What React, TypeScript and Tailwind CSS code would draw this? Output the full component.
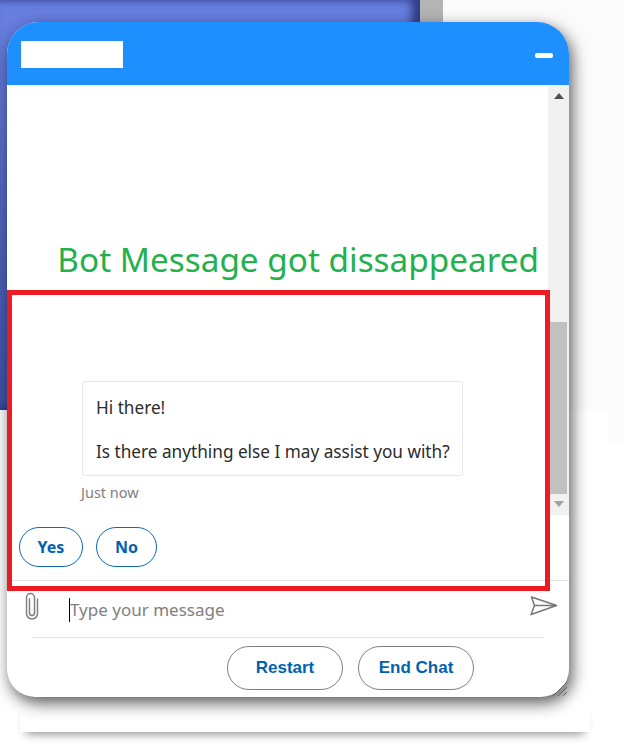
import React from "react";

const noto = "font-['Noto_Sans','Open_Sans',sans-serif]";

function Paperclip() {
  return (
    <svg width="18" height="28" viewBox="0 0 18 28" fill="none" stroke="#808080" strokeWidth="1.5" strokeLinecap="round">
      <path d="M6.5 7 V21 a2.5 2.5 0 0 0 5 0 V5.5 a4 4 0 0 0 -8 0 V21.5 a5.5 5.5 0 0 0 11 0 V7" />
    </svg>
  );
}

function Send() {
  return (
    <svg width="28" height="20" viewBox="0 0 28 20" fill="none" stroke="#777777" strokeWidth="1.5" strokeLinejoin="round">
      <path d="M1.5 1 L26.5 9.5 L1 18.5 L4.5 9.5 Z" />
      <path d="M4.5 9.5 H26.5" />
    </svg>
  );
}

function Grip() {
  return (
    <svg width="18" height="18" viewBox="0 0 18 18" fill="none" stroke="#666666" strokeWidth="1">
      <path d="M1 15 L15 1" />
      <path d="M6 15 L15 6" />
      <path d="M11 15 L15 11" />
    </svg>
  );
}

export default function App() {
  return (
    <div className={`relative w-[624px] h-[748px] overflow-hidden bg-white ${noto}`}>
      {/* page behind the widget */}
      <div className="absolute left-0 top-0 w-[420px] h-[410px] bg-gradient-to-b from-[#6a80e2] to-[#3f51a8] shadow-[inset_-8px_0_10px_rgba(20,30,90,0.7)]" />
      <div className="absolute left-[420px] top-0 w-[23px] h-[410px] bg-[#b4b4b6]" />
      <div className="absolute left-[443px] top-0 w-[181px] h-[443px] bg-[#fbfbfb]" />
      <div className="absolute left-[443px] top-[410px] w-[165px] h-[320px] bg-white" />
      <div className="absolute left-[20px] top-[700px] w-[570px] h-[32px] bg-white shadow-[0_8px_10px_-6px_rgba(0,0,0,0.45)]" />

      {/* chat widget */}
      <div className="absolute left-[7px] top-[22px] w-[562px] h-[675px] flex flex-col rounded-t-[32px] rounded-b-[28px] bg-white overflow-hidden shadow-[3px_6px_16px_rgba(0,0,0,0.65)]">
        <header className="h-[63px] shrink-0 bg-[#1e8fff] flex items-center justify-between pl-[14px] pr-[16px]">
          <div className="w-[102px] h-[27px] bg-white mt-[2px]" />
          <div className="w-[18px] h-[5px] rounded-[2px] bg-white mt-[4px]" />
        </header>

        <main className="h-[496px] shrink-0 flex border-b border-[#e5e5e5]">
          <div className="w-[541px] flex flex-col justify-end pb-[13px]">
            <div className="ml-[75px] w-[381px] h-[95px] border border-[#e6e6e6] rounded-[3px] px-[13px] pt-[14px] text-[17.2px] leading-[24px] text-[#2b2b2b]">
              <p className="mb-[20px]">Hi there!</p>
              <p className="whitespace-nowrap">Is there anything else I may assist you with?</p>
            </div>
            <div className="ml-[74px] mt-[7px] text-[14.5px] leading-[18px] text-[#808080]">Just now</div>
            <div className="flex gap-[13px] ml-[12px] mt-[26px]">
              <button className="w-[64px] h-[40px] rounded-[20px] border border-[#0f69b4] text-[16px] font-bold text-[#0063b1]">Yes</button>
              <button className="w-[61px] h-[40px] rounded-[20px] border border-[#0f69b4] text-[16px] font-bold text-[#0063b1]">No</button>
            </div>
          </div>
          <div className="w-[21px] h-[430px] bg-[#f1f1f1] flex flex-col justify-between">
            <div className="h-[237px] flex justify-center pt-[8px]">
              <div className="w-0 h-0 border-x-[5px] border-x-transparent border-b-[6px] border-b-[#505050]" />
            </div>
            <div className="w-[19px] h-[172px] bg-[#c1c1c1]" />
            <div className="h-[21px] flex justify-center pt-[7px]">
              <div className="w-0 h-0 border-x-[5px] border-x-transparent border-t-[6px] border-t-[#a3a3a3]" />
            </div>
          </div>
        </main>

        <footer className="flex-1 flex flex-col">
          <div className="h-[57px] mx-[25px] border-b border-[#e5e5e5] flex items-start">
            <div className="w-[36px] -ml-[9px] mt-[11px]"><Paperclip /></div>
            <div className="relative ml-[11px] mt-[17px] text-[17px] leading-[24px] text-[#808080] flex-1">
              <span className="absolute -left-[1px] top-0 w-px h-[24px] bg-black" />
              Type your message
            </div>
            <div className="-mr-[14px] mt-[15px]"><Send /></div>
          </div>
          <div className="flex gap-[15px] pt-[8px] pl-[220px] font-['Liberation_Sans',Arial,sans-serif]">
            <button className="w-[116px] h-[44px] rounded-[22px] border border-[#808080] text-[17px] font-bold text-[#0063b1]">Restart</button>
            <button className="w-[116px] h-[44px] rounded-[22px] border border-[#808080] text-[17px] font-bold text-[#0063b1]">End Chat</button>
          </div>
        </footer>
      </div>

      {/* annotations */}
      <div className="absolute left-[552px] top-[681px]"><Grip /></div>
      <div className="absolute right-[85px] top-[237px] text-[33.3px] leading-[44px] text-[#22b14c] whitespace-nowrap">Bot Message got dissappeared</div>
      <div className="absolute left-[7px] top-[290px] w-[543px] h-[301px] border-[5px] border-[#ed1c24]" />
    </div>
  );
}
